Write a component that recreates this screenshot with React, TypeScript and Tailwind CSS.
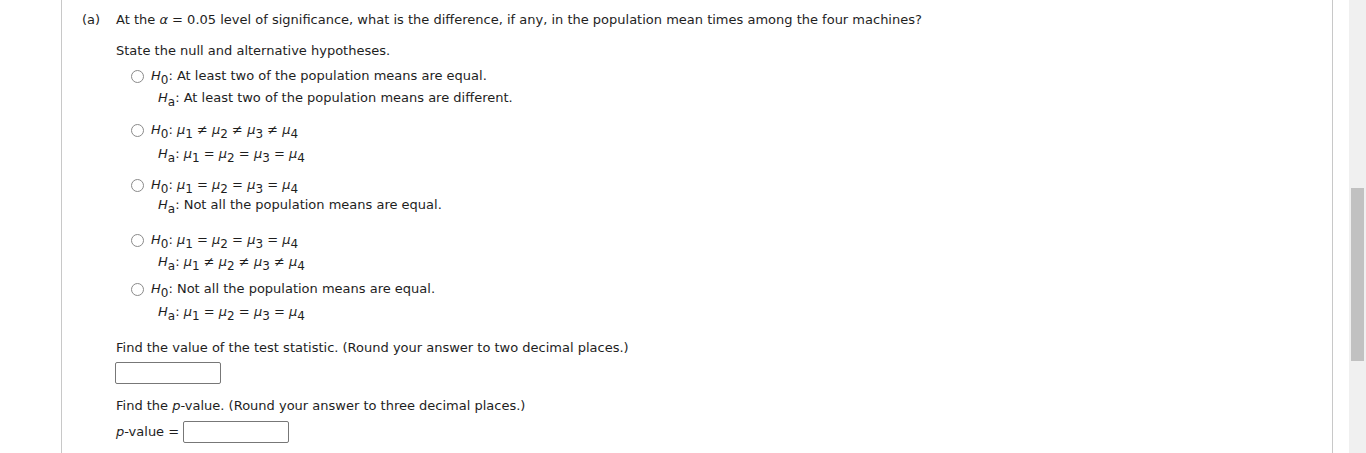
import React from "react";

const Hsub = ({ s }: { s: string }) => (
  <span>
    <i>H</i>
    <sub className="text-[12px] relative top-[4px] align-baseline">{s}</sub>
  </span>
);

const Mu = ({ n }: { n: number }) => (
  <span>
    <i>μ</i>
    <sub className="text-[12px] relative top-[4px] align-baseline">{n}</sub>
  </span>
);

const Chain = ({ op }: { op: string }) => (
  <span>
    <Mu n={1} /> {op} <Mu n={2} /> {op} <Mu n={3} /> {op} <Mu n={4} />
  </span>
);

const Radio = () => (
  <span className="inline-block w-[13px] h-[13px] rounded-full border border-[#8a8a8a] bg-white mr-[7px]" />
);

function Option({
  h0,
  ha,
  gap,
  mt,
}: {
  h0: React.ReactNode;
  ha: React.ReactNode;
  gap: string;
  mt: string;
}) {
  return (
    <div className={mt}>
      <div className="h-[18px] flex items-center pl-[15px]">
        <Radio />
        <span className="whitespace-nowrap">
          <Hsub s="0" />: {h0}
        </span>
      </div>
      <div className={`h-[18px] flex items-center pl-[42px] ${gap}`}>
        <span className="whitespace-nowrap">
          <Hsub s="a" />: {ha}
        </span>
      </div>
    </div>
  );
}

const Box = () => (
  <div className="w-[106px] h-[22px] -ml-px border border-[#777] rounded-[2px] bg-white" />
);

export default function App() {
  return (
    <div
      className="w-full h-[453px] bg-white flex text-[13px] text-[#1e1e1e] overflow-hidden"
      style={{ fontFamily: '"DejaVu Sans", Verdana, sans-serif' }}
    >
      <div className="w-[61px] shrink-0" />
      <div className="w-[1272px] shrink-0 border-l border-r border-[#c8c8c8] flex pt-[11px] pl-[20px]">
        <div className="w-[34px] h-[18px] leading-[18px] shrink-0">(a)</div>
        <div className="flex flex-col">
          <div className="h-[18px] leading-[18px] whitespace-nowrap">
            At the <i>α</i> = 0.05 level of significance, what is the difference, if any, in the population mean times among the four machines?
          </div>
          <div className="h-[18px] leading-[18px] mt-[13px]">State the null and alternative hypotheses.</div>

          <Option
            mt="mt-[7px]"
            gap="mt-[4px]"
            h0="At least two of the population means are equal."
            ha="At least two of the population means are different."
          />
          <Option mt="mt-[14px]" gap="mt-[6px]" h0={<Chain op="≠" />} ha={<Chain op="=" />} />
          <Option
            mt="mt-[13px]"
            gap="mt-[2px]"
            h0={<Chain op="=" />}
            ha="Not all the population means are equal."
          />
          <Option mt="mt-[17px]" gap="mt-[4px]" h0={<Chain op="=" />} ha={<Chain op="≠" />} />
          <Option
            mt="mt-[9px]"
            gap="mt-[5px]"
            h0="Not all the population means are equal."
            ha={<Chain op="=" />}
          />

          <div className="h-[18px] leading-[18px] mt-[18px]">
            Find the value of the test statistic. (Round your answer to two decimal places.)
          </div>
          <div className="mt-[5px]">
            <Box />
          </div>
          <div className="h-[18px] leading-[18px] mt-[13px]">
            Find the <i>p</i>-value. (Round your answer to three decimal places.)
          </div>
          <div className="mt-[6px] flex items-center h-[22px]">
            <span className="mr-[5px]">
              <i>p</i>-value =
            </span>
            <Box />
          </div>
        </div>
      </div>
      <div className="w-[16px] shrink-0" />
      <div className="w-[17px] shrink-0 bg-[#f0f0f0] flex justify-center">
        <div className="w-[13px] h-[173px] mt-[188px] bg-[#c1c1c1]" />
      </div>
    </div>
  );
}
